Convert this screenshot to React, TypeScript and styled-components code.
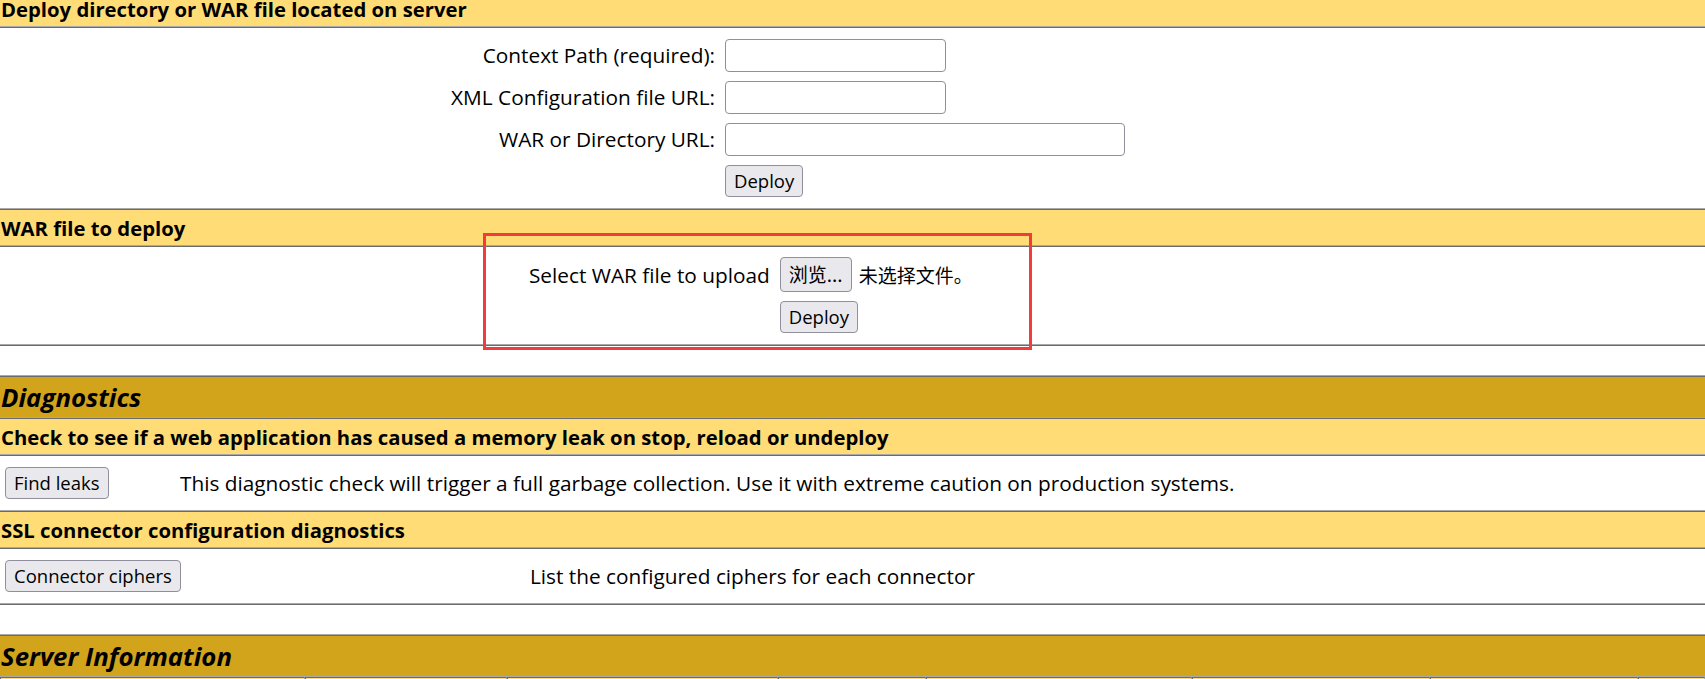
import React from "react";
import styled, { createGlobalStyle } from "styled-components";

const DARK = "#6b6b6b";
const LIGHT = "#a9a9a9";
const GOLD = "#d2a41c";
const PALE = "#ffdc75";
const FONT = `"Open Sans", "Noto Sans CJK SC", sans-serif`;
const TEXT = 20.8;
const HEAD = 20.3;
const TITLE = 25.8;
const BTN = 18.5;

const GlobalStyle = createGlobalStyle`
  html, body { margin: 0; padding: 0; background: #ffffff; overflow: hidden; }
  body { font-family: ${FONT}; color: #000000; font-size: ${TEXT}px; }
  * { box-sizing: border-box; }
`;

const Page = styled.main`
  position: relative;
  margin-top: -11px;
`;

const Table = styled.section`
  border-top: 1px solid ${LIGHT};
  border-bottom: 1px solid ${DARK};
`;

const Cell = styled.div`
  border-top: 1px solid ${DARK};
  border-bottom: 1px solid ${LIGHT};
`;

const TitleCell = styled(Cell)`
  background: ${GOLD};
  height: 42px;
  display: flex;
  align-items: center;
  padding: 0 1px;
  font-size: ${TITLE}px;
  font-weight: 700;
  font-style: italic;
  white-space: nowrap;
`;

const HeaderCell = styled(Cell)`
  background: ${PALE};
  height: 37px;
  display: flex;
  align-items: center;
  padding: 0 1px;
  font-size: ${HEAD}px;
  font-weight: 700;
  white-space: nowrap;
`;

const BodyCell = styled(Cell)<{ $pad: number }>`
  padding: ${(p) => p.$pad}px 0;
  background: #ffffff;
`;

const Gap = styled.div`
  height: 29px;
`;

const FormGrid = styled.div<{ $split: string }>`
  display: grid;
  grid-template-columns: ${(p) => p.$split} 1fr;
  align-items: center;
`;

const Label = styled.span<{ $rowH: number }>`
  justify-self: end;
  padding-right: 6px;
  height: ${(p) => p.$rowH}px;
  display: flex;
  align-items: center;
  white-space: nowrap;
`;

const Field = styled.div<{ $rowH: number }>`
  height: ${(p) => p.$rowH}px;
  padding-left: 4px;
  display: flex;
  align-items: center;
  gap: 7px;
`;

const TextInput = styled.input<{ $w: number }>`
  width: ${(p) => p.$w}px;
  height: 33px;
  border: 1px solid #8f8f9d;
  border-radius: 4px;
  background: #ffffff;
  font-family: ${FONT};
  font-size: ${TEXT}px;
  padding: 0 4px;
`;

const Button = styled.button<{ $h?: number }>`
  height: ${(p) => p.$h ?? 32}px;
  padding: 0 8px;
  border: 1px solid #8f8f9d;
  border-radius: 4px;
  background: #e9e9ed;
  color: #000000;
  font-family: ${FONT};
  font-size: ${BTN}px;
  line-height: 1;
  cursor: default;
  white-space: nowrap;
`;

const NoFile = styled.span`
  font-family: "Noto Sans CJK SC", sans-serif;
  font-size: 19px;
  white-space: nowrap;
`;

const BrowseLabel = styled.span`
  font-family: "Noto Sans CJK SC", sans-serif;
  font-size: 19px;
`;

const ActionRow = styled.div<{ $lead: string }>`
  display: grid;
  grid-template-columns: ${(p) => p.$lead} 1fr;
  align-items: center;
  height: 54px;
`;

const ActionCell = styled.div`
  padding-left: 5px;
  display: flex;
  align-items: center;
`;

const Note = styled.span`
  white-space: nowrap;
`;

const Annotation = styled.div`
  position: absolute;
  left: 483px;
  top: 244px;
  width: 549px;
  height: 117px;
  border: 3px solid #f03c3c;
  pointer-events: none;
`;

const ColumnHeads = styled.div`
  display: grid;
  grid-template-columns: 305px 202px 271px 148px 266px 238px 208px 1fr;
  background: ${PALE};
`;

const ColumnHead = styled.div`
  border-top: 1px solid ${DARK};
  border-left: 1px solid ${DARK};
  border-right: 1px solid ${LIGHT};
  border-bottom: 1px solid ${LIGHT};
  height: 37px;
  display: flex;
  align-items: center;
  justify-content: center;
  font-size: ${HEAD}px;
  font-weight: 700;
  white-space: nowrap;
  overflow: hidden;
`;

const serverCols = [
  "Tomcat Version",
  "JVM Version",
  "JVM Vendor",
  "OS Name",
  "OS Version",
  "OS Architecture",
  "Hostname",
  "IP Address",
];

export default function App() {
  return (
    <>
      <GlobalStyle />
      <Page>
        <Table>
          <HeaderCell>Deploy directory or WAR file located on server</HeaderCell>
          <BodyCell $pad={6}>
            <FormGrid $split="42.29%">
              <Label $rowH={42}>Context Path (required):</Label>
              <Field $rowH={42}>
                <TextInput $w={221} type="text" />
              </Field>
              <Label $rowH={42}>XML Configuration file URL:</Label>
              <Field $rowH={42}>
                <TextInput $w={221} type="text" />
              </Field>
              <Label $rowH={42}>WAR or Directory URL:</Label>
              <Field $rowH={42}>
                <TextInput $w={400} type="text" />
              </Field>
              <Label $rowH={42}>&nbsp;</Label>
              <Field $rowH={42}>
                <Button>Deploy</Button>
              </Field>
            </FormGrid>
          </BodyCell>
          <HeaderCell>WAR file to deploy</HeaderCell>
          <BodyCell $pad={6}>
            <FormGrid $split="45.5%">
              <Label $rowH={43}>Select WAR file to upload</Label>
              <Field $rowH={43}>
                <Button $h={35}>
                  <BrowseLabel>浏览...</BrowseLabel>
                </Button>
                <NoFile>未选择文件。</NoFile>
              </Field>
              <Label $rowH={42}>&nbsp;</Label>
              <Field $rowH={42}>
                <Button>Deploy</Button>
              </Field>
            </FormGrid>
          </BodyCell>
        </Table>
        <Gap />
        <Table>
          <TitleCell>Diagnostics</TitleCell>
          <HeaderCell>
            Check to see if a web application has caused a memory leak on stop, reload or undeploy
          </HeaderCell>
          <BodyCell $pad={0}>
            <ActionRow $lead="180px">
              <ActionCell>
                <Button>Find leaks</Button>
              </ActionCell>
              <Note>
                This diagnostic check will trigger a full garbage collection. Use it with extreme caution on
                production systems.
              </Note>
            </ActionRow>
          </BodyCell>
          <HeaderCell>SSL connector configuration diagnostics</HeaderCell>
          <BodyCell $pad={0}>
            <ActionRow $lead="530px">
              <ActionCell>
                <Button>Connector ciphers</Button>
              </ActionCell>
              <Note>List the configured ciphers for each connector</Note>
            </ActionRow>
          </BodyCell>
        </Table>
        <Gap />
        <Table>
          <TitleCell>Server Information</TitleCell>
          <ColumnHeads>
            {serverCols.map((c) => (
              <ColumnHead key={c}>{c}</ColumnHead>
            ))}
          </ColumnHeads>
        </Table>
        <Annotation />
      </Page>
    </>
  );
}
